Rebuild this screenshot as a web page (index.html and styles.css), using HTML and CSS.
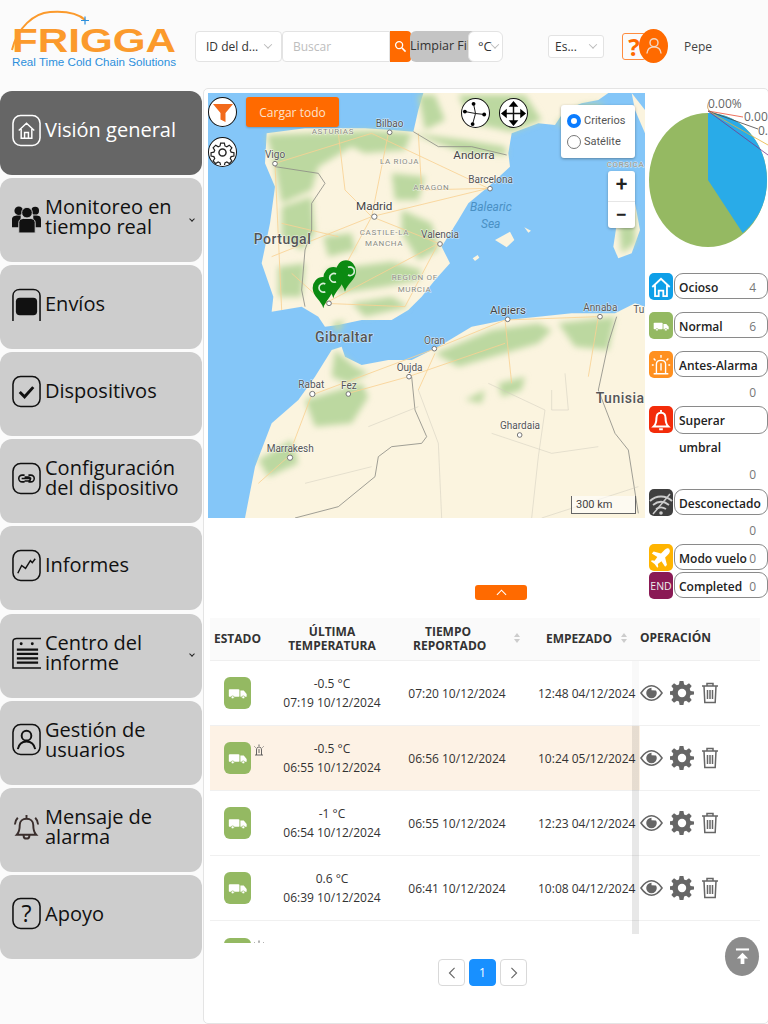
FILE: index.html
```html
<!DOCTYPE html>
<html lang="es">
<head>
<meta charset="utf-8">
<title>Frigga</title>
<link rel="stylesheet" href="styles.css">
</head>
<body>
<svg class="defs" width="0" height="0" aria-hidden="true">
  <defs>
    <symbol id="truck" viewBox="0 0 28 32">
      <rect x="5" y="12" width="11" height="8" rx="1" fill="#fff"/>
      <path d="M17 13.500h3.500l3 3.500v3h-6.500z" fill="#fff"/>
      <circle cx="9" cy="20.500" r="1.500" fill="#fff" stroke="#94b962" stroke-width=".7"/>
      <circle cx="20" cy="20.500" r="1.500" fill="#fff" stroke="#94b962" stroke-width=".7"/>
    </symbol>
    <symbol id="eye" viewBox="0 0 24 18">
      <path d="M1 9C5 3 9 1.500 12 1.500S19 3 23 9c-4 6-8 7.500-11 7.500S5 15 1 9z" fill="none" stroke="#666" stroke-width="1.600"/>
      <path d="M12 3.500a5.500 5.500 0 1 0 5.500 5.500c0-1-.3-1.900-.8-2.700L12 6z" fill="#666"/>
    </symbol>
    <symbol id="gear" viewBox="0 0 24 24">
      <path d="M10 0h4l.7 3.600 2.100.9 3-2.100 2.800 2.800-2.100 3 .9 2.100L25 11v3l-3.600.7-.9 2.100 2.100 3-2.800 2.800-3-2.100-2.100.9L14 25h-4l-.7-3.600-2.100-.9-3 2.100-2.800-2.800 2.100-3-.9-2.100L-1 14v-3l3.600-.7.900-2.100-2.100-3L4.200 2.400l3 2.100 2.100-.9z" fill="#666" transform="scale(.96)"/>
      <circle cx="12" cy="12" r="4.200" fill="#fff"/>
    </symbol>
    <symbol id="trash" viewBox="0 0 18 22">
      <path d="M1 4h16M6 4V1.500h6V4M3 4l.8 16.500h10.400L15 4M6.500 8v9M9 8v9M11.500 8v9" fill="none" stroke="#666" stroke-width="1.500"/>
    </symbol>
    <symbol id="box" viewBox="0 0 30 34">
      <rect x="1" y="1.500" width="28" height="31" rx="8" fill="none" stroke="currentColor" stroke-width="1.600"/>
    </symbol>
  </defs>
</svg>

<header class="topbar">
  <svg class="logo" viewBox="0 0 166 58" role="img" aria-label="Frigga">
    <path d="M0 40C5 18 22 3 38 2c14-1 28 1 35 8" fill="none" stroke="#fb9a2c" stroke-width="2"/>
    <path d="M69 10.500h8M73 6.500v8" stroke="#2b8fdc" stroke-width="1.200"/>
    <text class="logo-word" x="0" y="42" textLength="164" lengthAdjust="spacingAndGlyphs">FRIGGA</text>
    <text class="logo-tag" x="0" y="56" textLength="164" lengthAdjust="spacingAndGlyphs">Real Time Cold Chain Solutions</text>
  </svg>
  <div class="search-group">
    <div class="select select-id"><span>ID del d...</span><i class="chev"></i></div>
    <div class="search-input">Buscar</div>
    <button class="search-btn" aria-label="Buscar">
      <svg viewBox="0 0 14 14" width="13" height="13"><circle cx="5.500" cy="5.500" r="3.800" fill="none" stroke="#fff" stroke-width="1.400"/><path d="M8.500 8.500l4 4" stroke="#fff" stroke-width="1.600"/></svg>
    </button>
    <div class="clear-btn">Limpiar Fil</div>
    <div class="select select-unit"><span>°C</span><i class="chev"></i></div>
  </div>
  <div class="select select-lang"><span>Es...</span><i class="chev"></i></div>
  <div class="user">
    <div class="help">?</div>
    <div class="avatar">
      <svg viewBox="0 0 24 24" width="20" height="22"><circle cx="12" cy="8" r="4.800" fill="none" stroke="#f3d9c6" stroke-width="1.700"/><path d="M3.500 21c.5-5 4-8 8.500-8s8 3 8.500 8" fill="none" stroke="#f3d9c6" stroke-width="1.700"/></svg>
    </div>
    <span class="user-name">Pepe</span>
  </div>
</header>

<div class="layout">
  <nav class="sidebar">
    <a class="nav-item active">
      <svg class="nav-icon" viewBox="0 0 30 34"><use href="#box"/><path d="M7 17l8-7.500 8 7.500M9.500 15.500V25h11v-9.500M13 25v-6h4v6" fill="none" stroke="currentColor" stroke-width="1.500"/></svg>
      <span>Visión general</span>
    </a>
    <a class="nav-item">
      <svg class="nav-icon" viewBox="0 0 30 34"><circle cx="7" cy="10" r="4.500"/><circle cx="24" cy="10" r="4"/><path d="M0 27v-8c0-3 3-4 6-4h3v12zM22 15h3c3 0 5 1 5 4v8h-8z"/><circle cx="15.500" cy="12" r="5.500" stroke="#ccc"/><path d="M7 33V22c0-3 3-4 5-4h7c2 0 5 1 5 4v11z" stroke="#ccc"/></svg>
      <span>Monitoreo en tiempo real</span><i class="caret"></i>
    </a>
    <a class="nav-item">
      <svg class="nav-icon" viewBox="0 0 30 34"><path d="M1 34V8c0-4 3-6.500 7-6.500h14c4 0 7 2.500 7 6.500v26" fill="none" stroke="currentColor" stroke-width="1.600"/><rect x="4" y="10" width="22" height="18" rx="4"/></svg>
      <span>Envíos</span>
    </a>
    <a class="nav-item">
      <svg class="nav-icon" viewBox="0 0 30 34"><use href="#box"/><path d="M8 17.500l5 5 9-10" fill="none" stroke="currentColor" stroke-width="3"/></svg>
      <span>Dispositivos</span>
    </a>
    <a class="nav-item">
      <svg class="nav-icon" viewBox="0 0 30 34"><use href="#box"/><path d="M13 13.500H10.500a3.500 3.500 0 0 0 0 7H13M17 13.500h2.500a3.500 3.500 0 0 1 0 7H17M10 17h10M13 15.500h4a2 2 0 0 1 0 4h-4" fill="none" stroke="currentColor" stroke-width="1.600"/></svg>
      <span>Configuración del dispositivo</span>
    </a>
    <a class="nav-item">
      <svg class="nav-icon" viewBox="0 0 30 34"><use href="#box"/><path d="M6 25l4-8 4 3 5-8 2 2 3-4" fill="none" stroke="currentColor" stroke-width="1.500"/></svg>
      <span>Informes</span>
    </a>
    <a class="nav-item">
      <svg class="nav-icon" viewBox="0 0 30 34"><path d="M30 2.500H5c-2 0-4 1-4 3V33h29" fill="none" stroke="currentColor" stroke-width="1.600"/><circle cx="9.500" cy="8" r="1.500"/><circle cx="21" cy="8" r="1.500"/><path d="M5 14h22M5 18.500h22M5 23h22M5 27.500h22" stroke="currentColor" stroke-width="2.400"/></svg>
      <span>Centro del informe</span><i class="caret"></i>
    </a>
    <a class="nav-item">
      <svg class="nav-icon" viewBox="0 0 30 34"><use href="#box"/><circle cx="15" cy="13" r="5" fill="none" stroke="currentColor" stroke-width="2"/><path d="M6 27c1-5 4-8 9-8s8 3 9 8" fill="none" stroke="currentColor" stroke-width="2"/></svg>
      <span>Gestión de usuarios</span>
    </a>
    <a class="nav-item">
      <svg class="nav-icon bell" viewBox="0 0 30 34"><path d="M5 25.500c3-3 3-6 3-10 0-4 3-6.500 7-6.500s7 2.500 7 6.500c0 4 0 7 3 10zM15 5v4M12 26.500c0 2 1.500 3 3 3s3-1 3-3M3 15c0-3 1-5 3-7M27 15c0-3-1-5-3-7" fill="none" stroke="#3a2e2c" stroke-width="2"/></svg>
      <span>Mensaje de alarma</span>
    </a>
    <a class="nav-item">
      <svg class="nav-icon" viewBox="0 0 30 34"><use href="#box"/><text class="nav-q" x="15" y="26">?</text></svg>
      <span>Apoyo</span>
    </a>
  </nav>

  <main class="panel">
    <section class="overview">
      <div class="map">
        <svg class="map-art" viewBox="9 9 1311 1275" preserveAspectRatio="none">
          <defs>
            <filter id="soft" x="-5%" y="-5%" width="110%" height="110%"><feGaussianBlur stdDeviation="9"/></filter>
            <filter id="softer" x="-5%" y="-5%" width="110%" height="110%"><feGaussianBlur stdDeviation="1.200"/></filter>
          </defs>
          <rect x="9" y="9" width="1311" height="1275" fill="#84c6f8"/>
          <g filter="url(#softer)">
          <path class="land" d="M655 9L640 60 625 125 560 120 480 115 300 115 185 130 180 220 210 290 195 400 170 520 205 620 200 665 290 650 340 680 360 710 400 705 470 690 560 690 610 660 650 620 690 570 735 520 710 470 760 390 790 340 850 290 915 230 910 190 920 130 1000 100 1050 105 1080 60 1130 40 1180 30 1210 9z"/>
          <path class="land" d="M1280 9L1320 60V130L1290 60z"/>
          <path class="land" d="M120 1284L150 1130 200 1000 280 930 330 860 380 780 410 770 420 800 470 825 550 810 620 810 700 770 800 710 900 690 1000 680 1100 670 1230 670 1290 640 1320 650V1284z"/>
          <path class="land" d="M870 450L915 425 928 450 905 472zM803 505l15-10 5 8-13 10zM958 412l20 10-8 6z"/>
          <path class="land" d="M1240 370L1290 340 1305 420 1280 490 1240 505 1225 470z"/>
          </g>
          <g class="greens" filter="url(#soft)">
            <path d="M185 135L500 122 620 130 600 180 480 190 440 170 340 230 320 300 230 340 210 230z"/>
            <path d="M640 15L690 15 720 90 660 120zM760 15H960L1010 90 920 125 800 100z"/>
            <path d="M620 130L780 190 905 195 900 170 780 150z"/>
            <path d="M1050 100L1130 45 1200 40 1100 110z"/>
            <path d="M230 350L320 320 330 430 290 480 230 440z"/>
            <path d="M355 440L440 430 450 480 370 500z"/>
            <path d="M560 250L660 260 640 330 570 330z"/>
            <path d="M590 360L680 400 700 480 640 510 590 430z"/>
            <path d="M220 530L300 520 290 620 220 620z"/>
            <path d="M360 540L560 515 650 540 640 570 540 590 400 610z"/>
            <path d="M440 640L560 620 610 650 480 680z"/>
            <path d="M380 700L420 690 400 730z"/>
            <path d="M390 780L450 830 490 850 430 880 380 860z"/>
            <path d="M300 930L470 880 490 920 440 1000 330 1010z"/>
            <path d="M690 790L860 720 1000 700 1040 720 1000 760 760 830z"/>
            <path d="M1060 700L1230 680 1210 780 1110 770z"/>
            <path d="M880 880L960 860 950 900 890 920zM780 930L840 900 830 940z"/>
            <path d="M160 1110L260 1050 280 1120 190 1160z"/>
            <path d="M1240 390L1290 360 1290 460 1250 490z"/>
          </g>
          <g class="roads">
            <path d="M500 380L200 500M500 380L360 640M500 380L700 460M500 380L850 295M500 380L550 130M360 640L700 460M360 640L600 650M210 220L500 130 850 295M210 220L230 660M400 130L420 300 500 380M640 130L650 300 850 295M700 460L600 650M230 400L400 440M260 550L360 640"/>
            <path d="M320 915L680 780 900 690 1180 680M320 915L250 1100M430 910L610 860M610 860L900 760M900 690L920 880M1180 680L1150 860M250 1100L160 1180M690 790L640 900"/>
          </g>
          <g class="borders">
            <path d="M210 230L340 250 360 280 320 340 320 420 300 480 290 600 300 650"/>
            <path d="M625 125L700 170 800 170 905 195"/>
            <path d="M1235 680L1210 760 1180 900 1230 1030 1270 1080 1300 1270"/>
            <path d="M620 860L630 960 665 1040 650 1060 560 1070 520 1100 510 1160 400 1250 270 1284"/>
          </g>
          <g class="provinces">
            <path d="M640 900L700 1060 710 1284M850 880L1020 960 1000 1100 980 1284M860 1030L1040 1090 1180 1070M1040 900V960L1090 960 1080 850M490 1010L640 950M300 1180L500 1130M1010 1284L1300 1190"/>
          </g>
          <g class="cities">
            <circle cx="554" cy="127" r="7"/><circle cx="210" cy="221" r="7"/><circle cx="855" cy="296" r="7"/><circle cx="508" cy="380" r="8"/><circle cx="705" cy="462" r="7"/><circle cx="372" cy="640" r="7"/><circle cx="908" cy="688" r="7"/><circle cx="688" cy="776" r="7"/><circle cx="612" cy="860" r="7"/><circle cx="322" cy="912" r="8"/><circle cx="430" cy="912" r="7"/><circle cx="255" cy="1103" r="8"/><circle cx="944" cy="1035" r="7"/><circle cx="1185" cy="680" r="7"/>
          </g>
          <g class="lbl-city">
            <text x="512" y="110">Bilbao</text><text x="180" y="204">Vigo</text><text x="790" y="278">Barcelona</text><text x="648" y="445">Valencia</text><text x="280" y="895">Rabat</text><text x="408" y="896">Fez</text><text x="185" y="1087">Marrakesh</text><text x="885" y="1018">Ghardaia</text><text x="575" y="844">Oujda</text><text x="657" y="761">Oran</text><text x="1135" y="664">Annaba</text><text x="1285" y="670">Tu</text>
          </g>
          <g class="lbl-major">
            <text x="453" y="361">Madrid</text><text x="745" y="206">Andorra</text><text x="855" y="672">Algiers</text>
          </g>
          <g class="lbl-country">
            <text x="146" y="462">Portugal</text><text x="330" y="756">Gibraltar</text><text x="1172" y="940">Tunisia</text>
          </g>
          <g class="lbl-region">
            <text x="320" y="132">ASTURIAS</text><text x="525" y="223">LA RIOJA</text><text x="625" y="301">ARAGON</text><text x="464" y="435">CASTILE-LA</text><text x="480" y="467">MANCHA</text><text x="560" y="571">REGION OF</text><text x="578" y="606">MURCIA</text><text x="1205" y="230">CORSICA</text>
          </g>
          <g class="lbl-sea">
            <text x="795" y="362">Balearic</text><text x="828" y="414">Sea</text>
          </g>
          <g class="pins">
            <g transform="translate(423 540)"><path d="M-3 65C-8 42-30 30-30 4a30 33 0 0 1 60 0C30 30 2 42-3 65z"/><path class="pin-c" d="M6-8a13 13 0 1 1 0 23"/></g>
            <g transform="translate(385 560)"><path d="M0 65C-5 42-30 30-30 4a30 33 0 0 1 60 0C30 30 5 42 0 65z"/><path class="pin-c" d="M8-8a13 13 0 1 0 0 23"/></g>
            <g transform="translate(353 590)"><path d="M2 65C-3 42-30 30-30 4a30 33 0 0 1 60 0C30 30 7 42 2 65z"/><path class="pin-c" d="M8-8a13 13 0 1 0 0 23"/></g>
          </g>
        </svg>

        <div class="round-btn btn-filter">
          <svg viewBox="0 0 24 24" width="24" height="24"><path d="M2 4h20l-7.500 9v9l-5-2.500V13z" fill="#f26a1b"/></svg>
        </div>
        <button class="load-all">Cargar todo</button>
        <div class="round-btn btn-gear">
          <svg viewBox="0 0 24 24" width="25" height="25"><path d="M10 2h4l.6 3 2 .9 2.600-1.700 2.800 2.800-1.700 2.600.9 2 3 .6v3.600l-3 .6-.9 2 1.700 2.600-2.800 2.800-2.600-1.700-2 .9-.6 3h-4l-.6-3-2-.9-2.600 1.700-2.800-2.800 1.700-2.600-.9-2-3-.6v-3.600l3-.6.9-2-1.700-2.600 2.800-2.800 2.600 1.700 2-.9z" fill="none" stroke="#222" stroke-width="1.300" transform="translate(1.200 1.200) scale(.9)"/><circle cx="12" cy="12" r="3.400" fill="none" stroke="#222" stroke-width="1.400"/></svg>
        </div>
        <div class="round-btn btn-nodes">
          <svg viewBox="0 0 28 28" width="27" height="27"><path d="M14 14L12 4M14 14L3 12M14 14L23 15M14 14L11 25" stroke="#111" stroke-width="1"/><circle cx="12" cy="4" r="2"/><circle cx="3" cy="12" r="2"/><circle cx="23" cy="15" r="2"/><circle cx="11" cy="25" r="2"/></svg>
        </div>
        <div class="round-btn btn-expand">
          <svg viewBox="0 0 28 28" width="27" height="27"><path d="M14 4v20M4 14h20" stroke="#111" stroke-width="1.500"/><path d="M14 1l-5 6h10zM14 27l-5-6h10zM1 14l6-5v10zM27 14l-6-5v10z"/></svg>
        </div>
        <div class="map-type">
          <label class="radio-row"><i class="radio on"></i>Criterios</label>
          <label class="radio-row"><i class="radio"></i>Satélite</label>
        </div>
        <div class="zoom-ctl"><b>+</b><b>−</b></div>
        <div class="scale">300 km</div>
      </div>

      <aside class="status">
        <svg class="pie" viewBox="0 0 123 184">
          <ellipse cx="63" cy="91" rx="59" ry="67" fill="#95b962"/>
          <path d="M63 91V24C95.600 24 122 54 122 91c0 20-7 38-24.300 53z" fill="#29abe8"/>
          <path d="M63 22l35 6" fill="none" stroke="#e74c33" stroke-width=".8"/>
          <path d="M63 22l50 18" fill="none" stroke="#444" stroke-width=".8"/>
          <path d="M63 22l60 34" fill="none" stroke="#e8b33a" stroke-width=".8"/>
          <path d="M63 22l60 44" fill="none" stroke="#7b3a8c" stroke-width=".8"/>
          <path d="M65 22c-3-2-3-6-1-9" fill="none" stroke="#c9924a" stroke-width=".8"/>
          <text class="pie-txt" x="63" y="19">0.00%</text>
          <text class="pie-txt" x="99" y="32">0.00</text>
          <text class="pie-txt" x="113" y="46">0.</text>
        </svg>
        <ul class="legend">
          <li class="legend-row row-a">
            <span class="badge blue"><svg viewBox="0 0 24 26" width="22" height="24"><path d="M2.500 13L12 4l9.500 9M5.500 11v12h4v-6h5v6h4V11" fill="none" stroke="#fff" stroke-width="2"/></svg></span>
            <div class="pill"><b>Ocioso</b><em>4</em></div>
          </li>
          <li class="legend-row row-b">
            <span class="badge green"><svg viewBox="0 0 28 32" width="24" height="26"><use href="#truck"/></svg></span>
            <div class="pill"><b>Normal</b><em>6</em></div>
          </li>
          <li class="legend-row row-c">
            <span class="badge orange"><svg viewBox="0 0 24 26" width="22" height="24"><path d="M7 22V12c0-3 2-4 5-4s5 1 5 4v10M4 22.500h16M12 2v3M4 6l2 2M20 6l-2 2M2 13h2M20 13h2M12 11v8" fill="none" stroke="#fff" stroke-width="1.500"/></svg></span>
            <div class="pill"><b>Antes-Alarma</b><em>0</em></div>
          </li>
          <li class="legend-row row-d">
            <span class="badge red"><svg viewBox="0 0 24 28" width="22" height="26"><path d="M4 21c2-2 3-4 3-9 0-4 2-6 5-6s5 2 5 6c0 5 1 7 3 9zM10 24h4" fill="none" stroke="#fff" stroke-width="2.200"/><path d="M12 3v3" stroke="#fff" stroke-width="2"/></svg></span>
            <div class="pill"><b>Superar umbral</b><em>0</em></div>
          </li>
          <li class="legend-row row-e">
            <span class="badge dark"><svg viewBox="0 0 24 28" width="24" height="28"><path d="M1 12c6-6 16-6 22 0M4 16c5-4 11-4 16 0M7 20c3-2 7-2 10 0" fill="none" stroke="#ccc" stroke-width="1.800"/><circle cx="12" cy="24" r="1.800" fill="#ccc"/><path d="M4 25L21 5" stroke="#ccc" stroke-width="1.500"/></svg></span>
            <div class="pill"><b>Desconectado</b><em>0</em></div>
          </li>
          <li class="legend-row row-f">
            <span class="badge yellow"><svg viewBox="0 0 24 28" width="22" height="26"><path d="M21 4c-2-1.500-4 0-6 2l-3 3-8-2-2 2 6 4-3 4-3-.5-1 1 4 3 3 4 1-1-.5-3 4-3 4 6 2-2-2-8 3-3c2-2 3-4 1.500-6z" fill="#fff"/></svg></span>
            <div class="pill"><b>Modo vuelo</b><em>0</em></div>
          </li>
          <li class="legend-row row-g">
            <span class="badge maroon">END</span>
            <div class="pill"><b>Completed</b><em>0</em></div>
          </li>
        </ul>
      </aside>
    </section>

    <div class="collapse-bar">
      <button class="collapse-btn" aria-label="Contraer"><svg viewBox="0 0 12 7" width="11" height="7"><path d="M1 6l5-5 5 5" fill="none" stroke="#fff" stroke-width="1.200"/></svg></button>
    </div>

    <section class="table-wrap">
      <div class="t-row t-head">
        <div class="th th-left">ESTADO</div>
        <div class="th">ÚLTIMA TEMPERATURA</div>
        <div class="th th-sort">TIEMPO REPORTADO<i class="sort"></i></div>
        <div class="th th-start">EMPEZADO<i class="sort"></i></div>
        <div class="th th-op">OPERACIÓN</div>
      </div>

      <div class="t-row">
        <div class="td-status"><span class="st-badge"><svg viewBox="0 0 28 32"><use href="#truck"/></svg></span></div>
        <div class="td-c">-0.5 °C<br>07:19 10/12/2024</div>
        <div class="td-c">07:20 10/12/2024</div>
        <div class="td-d">12:48 04/12/2024</div>
        <div class="td-op"><svg class="i-eye"><use href="#eye"/></svg><svg class="i-gear"><use href="#gear"/></svg><svg class="i-trash"><use href="#trash"/></svg></div>
      </div>
      <div class="t-row warn">
        <div class="td-status"><span class="st-badge"><svg viewBox="0 0 28 32"><use href="#truck"/></svg></span><svg class="mini-alarm" viewBox="0 0 12 12"><path d="M3.500 11V6c0-2 1-3 2.500-3s2.500 1 2.500 3v5M2 11h8M6 .5V2M1.500 2.500l1 1M10.500 2.500l-1 1M6 5v4" fill="none" stroke="#555" stroke-width=".9"/></svg></div>
        <div class="td-c">-0.5 °C<br>06:55 10/12/2024</div>
        <div class="td-c">06:56 10/12/2024</div>
        <div class="td-d">10:24 05/12/2024</div>
        <div class="td-op"><svg class="i-eye"><use href="#eye"/></svg><svg class="i-gear"><use href="#gear"/></svg><svg class="i-trash"><use href="#trash"/></svg></div>
      </div>
      <div class="t-row">
        <div class="td-status"><span class="st-badge"><svg viewBox="0 0 28 32"><use href="#truck"/></svg></span></div>
        <div class="td-c">-1 °C<br>06:54 10/12/2024</div>
        <div class="td-c">06:55 10/12/2024</div>
        <div class="td-d">12:23 04/12/2024</div>
        <div class="td-op"><svg class="i-eye"><use href="#eye"/></svg><svg class="i-gear"><use href="#gear"/></svg><svg class="i-trash"><use href="#trash"/></svg></div>
      </div>
      <div class="t-row">
        <div class="td-status"><span class="st-badge"><svg viewBox="0 0 28 32"><use href="#truck"/></svg></span></div>
        <div class="td-c">0.6 °C<br>06:39 10/12/2024</div>
        <div class="td-c">06:41 10/12/2024</div>
        <div class="td-d">10:08 04/12/2024</div>
        <div class="td-op"><svg class="i-eye"><use href="#eye"/></svg><svg class="i-gear"><use href="#gear"/></svg><svg class="i-trash"><use href="#trash"/></svg></div>
      </div>
      <div class="t-row t-last">
        <div class="td-status"><span class="st-badge"><svg viewBox="0 0 28 32"><use href="#truck"/></svg></span><svg class="mini-alarm" viewBox="0 0 12 12"><path d="M3.500 11V6c0-2 1-3 2.500-3s2.500 1 2.500 3v5M2 11h8M6 .5V2M1.500 2.500l1 1M10.500 2.500l-1 1M6 5v4" fill="none" stroke="#555" stroke-width=".9"/></svg></div>
        <div class="td-c">13.9 °C</div>
      </div>
      <div class="fix-shadow"></div>
    </section>

    <div class="pager">
      <button class="pg"><svg viewBox="0 0 8 14" width="8" height="12"><path d="M7 1L1 7l6 6" fill="none" stroke="#666" stroke-width="1.300"/></svg></button>
      <button class="pg current">1</button>
      <button class="pg"><svg viewBox="0 0 8 14" width="8" height="12"><path d="M1 1l6 6-6 6" fill="none" stroke="#666" stroke-width="1.300"/></svg></button>
    </div>
    <button class="to-top" aria-label="Arriba"><svg viewBox="0 0 16 18" width="15" height="17"><path d="M1 1.500h14" stroke="#fff" stroke-width="2.200"/><path d="M8 5l6 6H10v6H6v-6H2z" fill="#fff"/></svg></button>
  </main>
</div>
</body>
</html>
```
FILE: styles.css
```css
* { box-sizing: border-box; }
html, body { margin: 0; padding: 0; }
body {
  width: 768px;
  height: 1024px;
  overflow: hidden;
  background: #fbfbfb;
  color: #333;
  font-family: "Open Sans", "Noto Sans", sans-serif;
}
.defs { position: absolute; }
button { font-family: inherit; border: 0; padding: 0; cursor: pointer; }

/* top bar */
.topbar {
  display: flex;
  align-items: center;
  height: 88px;
  padding: 4px 0 0 12px;
}
.logo { width: 166px; height: 58px; margin-top: -14px; flex: none; overflow: visible; }
.logo-word { font: 700 33px "Liberation Sans", sans-serif; fill: #fb9a2c; }
.logo-tag { font: 400 10.500px "Liberation Sans", sans-serif; fill: #2b8fdc; }

.search-group { display: flex; align-items: stretch; height: 31px; margin-left: 17px; flex: none; }
.select {
  display: flex;
  align-items: center;
  background: #fff;
  border: 1px solid #e3e3e3;
  border-radius: 4px;
  font-size: 12px;
  color: #333;
}
.select-id { width: 87px; padding: 0 10px; justify-content: space-between; }
.chev {
  width: 6px; height: 6px;
  border-right: 1px solid #bbb; border-bottom: 1px solid #bbb;
  transform: rotate(45deg) translate(-1px, -1px);
  flex: none;
}
.search-input {
  width: 108px;
  display: flex; align-items: center;
  padding-left: 10px;
  background: #fff;
  border: 1px solid #e3e3e3;
  border-radius: 4px 0 0 4px;
  font-size: 12px;
  color: #bdbdbd;
}
.search-btn {
  width: 21px;
  display: flex; align-items: center; justify-content: center;
  background: #ff6a00;
  border-radius: 0 4px 4px 0;
}
.clear-btn {
  width: 68px;
  margin-left: -1px;
  padding-left: 0;
  background: #c4c4c4;
  border-radius: 6px;
  font-size: 12.500px;
  line-height: 29px;
  white-space: nowrap;
  overflow: hidden;
  color: #333;
}
.select-unit {
  width: 35px;
  margin-left: -10px;
  padding-left: 9px;
  position: relative;
  border-radius: 6px;
  font-size: 13px;
}
.select-lang {
  width: 56px; height: 23px;
  margin-left: 45px;
  padding: 0 7px 0 6px;
  justify-content: space-between;
  border-radius: 3px;
  flex: none;
}
.user { display: flex; align-items: center; margin-left: 18px; flex: none; }
.help {
  width: 24px; height: 27px;
  border: 1px solid #ff8c3f;
  border-radius: 3px;
  color: #ff6a00;
  font-size: 24px;
  font-weight: 700;
  line-height: 26px;
  text-align: center;
}
.avatar {
  width: 29px; height: 34px;
  margin-left: -7px;
  border-radius: 50%;
  background: #ff6a00;
  display: flex; align-items: center; justify-content: center;
}
.user-name { margin-left: 16px; font-size: 12px; color: #444; }

/* layout */
.layout { display: flex; align-items: flex-start; }
.sidebar { width: 203px; flex: none; padding-top: 3px; display: flex; flex-direction: column; gap: 3.100px; }
.nav-item {
  display: flex;
  align-items: center;
  height: 84px;
  width: 202px;
  padding: 0 6px 6px 12px;
  background: #cdcdcd;
  border-radius: 12px;
  color: #111;
  font-size: 20px;
  line-height: 20px;
}
.nav-item span { flex: 1; margin-left: 4px; }
.nav-item.active { background: #666; color: #fff; }
.nav-icon { width: 29px; height: 33px; flex: none; fill: currentColor; color: #111; }
.active .nav-icon { color: #fff; }
.nav-q { font-size: 24px; text-anchor: middle; font-family: "Open Sans", sans-serif; }
.caret {
  width: 4px; height: 4px;
  margin: 3px 2px 0 0;
  border-right: 1.500px solid #222; border-bottom: 1.500px solid #222;
  transform: rotate(45deg);
  flex: none;
}

/* main panel */
.panel {
  position: relative;
  flex: 1;
  height: 936px;
  background: #fff;
  border: 1px solid #e4e4e4;
  border-radius: 5px;
  padding: 4px 0 0 4px;
}
.overview { display: flex; height: 480px; align-items: flex-start; }
.map { position: relative; width: 437px; height: 425px; flex: none; overflow: hidden; }
.map-art { display: block; width: 437px; height: 425px; }
.land { fill: #fbf4df; }
.greens path { fill: #bcd8a0; }
.roads path { fill: none; stroke: #f9d193; stroke-width: 2.500; }
.borders path { fill: none; stroke: #8d8d86; stroke-width: 2.500; }
.provinces path { fill: none; stroke: #cfcabc; stroke-width: 1.500; }
.cities circle { fill: #fff; stroke: #777; stroke-width: 3; }
.map-art text { font-family: Roboto, "Liberation Sans", sans-serif; paint-order: stroke; stroke: rgba(255,255,255,.7); stroke-width: 3px; }
.lbl-city text { font-size: 30px; fill: #555; }
.lbl-major text { font-size: 35px; fill: #444; }
.lbl-country text { font-size: 42px; font-weight: 500; fill: #555; letter-spacing: 1.500px; }
.lbl-region text { font-size: 24px; fill: #8b8b80; letter-spacing: 2px; }
.map-art .lbl-sea text { font-size: 36px; font-style: italic; fill: #4a90c4; stroke: none; }
.pins path { fill: #0b8a12; }
.pins .pin-c { fill: none; stroke: #d8efd8; stroke-width: 5; }

.round-btn {
  position: absolute;
  width: 29px; height: 30px;
  display: flex; align-items: center; justify-content: center;
  background: #fff;
  border: 1.500px solid #111;
  border-radius: 50%;
}
.btn-filter { left: 0; top: 4px; }
.btn-gear { left: 0; top: 44px; }
.btn-nodes { left: 253px; top: 5px; }
.btn-expand { left: 291px; top: 5px; }
.load-all {
  position: absolute;
  left: 38px; top: 4px;
  width: 93px; height: 30px;
  background: #ff6a00;
  border-radius: 3px;
  color: #fde2cd;
  font-size: 12px;
  box-shadow: 0 1px 2px rgba(0,0,0,.2);
}
.map-type {
  position: absolute;
  left: 353px; top: 12px;
  width: 74px; height: 53px;
  padding: 5px 0 0 6px;
  background: #fff;
  border-radius: 3px;
  box-shadow: 0 1px 3px rgba(0,0,0,.35);
  font-family: Roboto, sans-serif;
  font-size: 11px;
  color: #555;
}
.radio-row { display: flex; align-items: center; gap: 3px; height: 21px; }
.radio { width: 14px; height: 14px; border-radius: 50%; border: 1px solid #777; background: #fff; flex: none; }
.radio.on { border: 4px solid #0a7cff; }
.zoom-ctl {
  position: absolute;
  left: 400px; top: 78px;
  width: 27px; height: 57px;
  background: #fff;
  border-radius: 3px;
  box-shadow: 0 1px 3px rgba(0,0,0,.3);
  display: flex; flex-direction: column;
}
.zoom-ctl b {
  flex: 1;
  display: flex; align-items: center; justify-content: center;
  font: 500 21px Roboto, sans-serif;
  color: #222;
}
.zoom-ctl b:first-child { border-bottom: 1px solid #e6e6e6; padding-bottom: 3px; }
.scale {
  position: absolute;
  left: 363px; top: 403px;
  width: 65px; height: 18px;
  padding-left: 4px;
  background: rgba(255,255,255,.55);
  border: 1.500px solid #666;
  border-top: 0;
  font: 400 11px/17px Roboto, sans-serif;
  color: #444;
}

/* status column */
.status { width: 123px; flex: none; margin-top: -4px; }
.pie { display: block; width: 123px; height: 184px; overflow: hidden; }
.pie-txt { font: 12px "Open Sans", sans-serif; fill: #666; }
.legend { list-style: none; margin: 0; padding: 0 0 0 4px; }
.legend-row { display: flex; align-items: flex-start; }
.row-a { height: 39px; }
.row-b { height: 39px; }
.row-c { height: 55px; }
.row-d { height: 83px; }
.row-e { height: 55px; }
.row-f { height: 28px; }
.row-g { height: 28px; }
.badge {
  width: 24px; height: 27px;
  flex: none;
  border-radius: 5px;
  display: flex; align-items: center; justify-content: center;
  color: #eee;
  font-size: 10.500px;
}
.blue { background: #0e9fe8; }
.green { background: #94b962; }
.orange { background: #ff9020; }
.red { background: #f32c0a; }
.dark { background: #3f3f3f; }
.yellow { background: #ffb400; }
.maroon { background: #8a1a55; }
.pill {
  width: 94px; height: 26px;
  margin-left: 1px;
  padding: 0 3px 0 4px;
  display: flex;
  flex-wrap: wrap;
  justify-content: space-between;
  background: #fff;
  border: 1px solid #8a8a8a;
  border-radius: 9px;
  line-height: 27px;
  font-size: 12px;
}
.pill b { font-weight: 600; color: #222; }
.pill em { font-style: normal; color: #777; margin: 0 8px 0 auto; }
.row-d .pill { height: 28px; }

.collapse-bar { display: flex; justify-content: flex-start; padding-left: 267px; margin-top: 12px; }
.collapse-btn {
  width: 52px; height: 15px;
  display: flex; align-items: center; justify-content: center;
  background: #ff6a00;
  border-radius: 3px;
}

/* table */
.table-wrap {
  position: relative;
  width: 550px;
  height: 325px;
  margin: 18px 0 0 2px;
  overflow: hidden;
  font-size: 12px;
  color: #333;
}
.t-row {
  display: grid;
  grid-template-columns: 62px 120px 130px 118px 120px;
  align-items: center;
  height: 65px;
  border-bottom: 1px solid #f0f0f0;
}
.t-head {
  height: 43px;
  background: #fafafa;
  font-weight: 700;
  line-height: 14px;
  border-bottom: 1px solid #efefef;
}
.t-last { align-items: start; padding-top: 17px; border: 0; }
.th { text-align: center; padding: 0 16px; color: #333; font-size: 12px; position: relative; }
.th-left { text-align: left; padding: 0 0 0 4px; }
.th-sort { padding: 0 39px 0 21px; }
.th-start { padding: 0 0 0 24px; text-align: left; }
.th-op { text-align: left; padding: 0; height: 100%; line-height: 39px; }
.sort {
  position: absolute;
  right: 3px; top: 50%;
  width: 0; height: 0;
  margin-top: -6px;
  border-left: 3.500px solid transparent;
  border-right: 3.500px solid transparent;
  border-bottom: 4px solid #ccc;
}
.sort::after {
  content: "";
  position: absolute;
  left: -3.500px; top: 6px;
  border-left: 3.500px solid transparent;
  border-right: 3.500px solid transparent;
  border-top: 4px solid #ccc;
}
.th-sort .sort { right: 2px; }
.th-start .sort { right: 13px; }
.td-status { display: flex; align-items: flex-start; padding-left: 14px; }
.st-badge {
  width: 27px; height: 32px;
  background: #94b962;
  border-radius: 6px;
  display: block;
}
.st-badge svg { display: block; width: 27px; height: 32px; }
.mini-alarm { width: 12px; height: 12px; margin: 2px 0 0 2px; }
.td-c { text-align: center; line-height: 19px; }
.td-d { padding-left: 16px; white-space: nowrap; }
.td-op { display: flex; align-items: center; height: 100%; background: #fff; position: relative; z-index: 1; }
.warn { background: #fdf2e5; }
.i-eye { width: 23px; height: 18px; margin-left: 0; }
.i-gear { width: 24px; height: 24px; margin-left: 7px; }
.i-trash { width: 18px; height: 22px; margin-left: 7px; }
.fix-shadow {
  position: absolute;
  left: 422px; top: 43px;
  width: 7px; height: 273px;
  background: linear-gradient(rgba(0,0,0,.025) 0 65px, rgba(0,0,0,.09) 65px);
}

.pager { display: flex; justify-content: center; gap: 4px; margin: 16px 0 0 0; padding-right: 11px; }
.pg {
  width: 27px; height: 27px;
  display: flex; align-items: center; justify-content: center;
  background: #fff;
  border: 1px solid #d9d9d9;
  border-radius: 4px;
  color: #fff;
  font-size: 12px;
}
.pg.current { background: #1890ff; border-color: #1890ff; }
.to-top {
  position: absolute;
  left: 521px; top: 848px;
  z-index: 2;
  width: 34px; height: 39px;
  display: flex; align-items: center; justify-content: center;
  background: #8c8c8c;
  border-radius: 50%;
}
```
